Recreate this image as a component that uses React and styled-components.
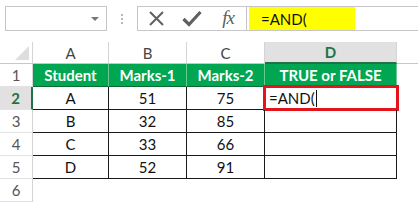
import React from "react";
import styled, { createGlobalStyle } from "styled-components";

const Global = createGlobalStyle`
  html, body { margin: 0; padding: 0; background: #ffffff; }
  body { font-family: Lato, "Open Sans", Arial, sans-serif; overflow: hidden; }
`;

const Page = styled.div`
  width: 418px;
  height: 202px;
  overflow: hidden;
  background: #fff;
`;

const Toolbar = styled.div`
  display: flex;
  align-items: flex-start;
  height: 42px;
  padding-top: 6px;
  box-sizing: border-box;
`;

const NameBox = styled.div`
  margin-left: 5px;
  width: 102px;
  height: 25px;
  box-sizing: border-box;
  border: 1px solid #c6c6c6;
  display: flex;
  align-items: center;
  justify-content: flex-end;
  padding-right: 7px;
`;

const Caret = styled.div`
  width: 0;
  height: 0;
  border-left: 4px solid transparent;
  border-right: 4px solid transparent;
  border-top: 4px solid #777;
`;

const Dots = styled.div`
  width: 30px;
  height: 25px;
  display: flex;
  flex-direction: column;
  align-items: center;
  justify-content: center;
  gap: 2px;
  & > span {
    width: 2px;
    height: 2px;
    background: #b8b8b8;
  }
`;

const FormulaBar = styled.div`
  flex: 1;
  height: 25px;
  box-sizing: border-box;
  border: 1px solid #c6c6c6;
  border-right: none;
  display: flex;
  align-items: stretch;
`;

const IconSlot = styled.div`
  width: ${(p) => p.$w}px;
  display: flex;
  align-items: center;
  justify-content: center;
  border-right: ${(p) => (p.$sep ? "1px solid #c6c6c6" : "none")};
  box-sizing: border-box;
`;

const Fx = styled.span`
  font-family: "Liberation Serif", "DejaVu Serif", serif;
  font-style: italic;
  font-size: 19px;
  color: #606060;
  letter-spacing: -1px;
  line-height: 1;
  margin-top: -2px;
`;

const Formula = styled.div`
  margin-left: 2px;
  width: 106px;
  background: #ffff00;
  font-size: 15px;
  color: #111;
  display: flex;
  align-items: center;
  padding-left: 12px;
  box-sizing: border-box;
`;

const Sheet = styled.div`
  display: grid;
  grid-template-columns: 33px 76px 78px 78px 132px 1fr;
  grid-template-rows: 22px repeat(6, 23px);
`;

const Corner = styled.div`
  position: relative;
  border-right: 1px solid #d4d4d4;
  border-bottom: 1px solid #c8c8c8;
  box-sizing: border-box;
  display: flex;
  align-items: flex-end;
  justify-content: flex-end;
  padding: 0 3px 3px 0;
`;

const Tri = styled.div`
  width: 0;
  height: 0;
  border-left: 14px solid transparent;
  border-bottom: 14px solid #dedede;
`;

const ColHead = styled.div`
  box-sizing: border-box;
  display: flex;
  align-items: center;
  justify-content: center;
  font-size: 15px;
  color: ${(p) => (p.$sel ? "#217346" : "#444")};
  font-weight: ${(p) => (p.$sel ? 700 : 400)};
  background: ${(p) => (p.$sel ? "#e1e1e1" : "#fff")};
  border-right: ${(p) => (p.$last ? "none" : "1px solid #d4d4d4")};
  border-bottom: ${(p) => (p.$sel ? "2px solid #217346" : "1px solid #c8c8c8")};
`;

const RowHead = styled.div`
  box-sizing: border-box;
  display: flex;
  align-items: center;
  justify-content: center;
  font-size: 15px;
  color: ${(p) => (p.$sel ? "#217346" : "#555")};
  font-weight: ${(p) => (p.$sel ? 700 : 400)};
  background: ${(p) => (p.$sel ? "#e1e1e1" : "#fff")};
  border-right: ${(p) => (p.$sel ? "2px solid #217346" : "1px solid #d4d4d4")};
  border-bottom: 1px solid #e2e2e2;
`;

const Cell = styled.div`
  position: relative;
  box-sizing: border-box;
  display: flex;
  align-items: center;
  justify-content: ${(p) => (p.$left ? "flex-start" : "center")};
  padding-left: ${(p) => (p.$left ? "4px" : "0")};
  font-size: 15px;
  color: #111;
  border-right: ${(p) => (p.$table ? "1px solid #1a1a1a" : "none")};
  border-bottom: ${(p) => (p.$table ? "1px solid #1a1a1a" : "none")};
`;

const HeadCell = styled(Cell)`
  background: #00a651;
  color: #fff;
  font-weight: 700;
  font-size: 15px;
  border-right: 1px solid #6cc893;
  border-bottom: 1px solid #0b6b33;
`;

const Active = styled.div`
  position: absolute;
  left: -2px;
  top: -2px;
  right: -3px;
  bottom: -2px;
  border: 3px solid #e3151b;
  pointer-events: none;
`;

const TextCaret = styled.span`
  display: inline-block;
  width: 1px;
  height: 17px;
  background: #111;
  margin-left: 1px;
`;

const data = [
  ["A", "51", "75"],
  ["B", "32", "85"],
  ["C", "33", "66"],
  ["D", "52", "91"],
];

export default function App() {
  return (
    <Page>
      <Global />
      <Toolbar>
        <NameBox>
          <Caret />
        </NameBox>
        <Dots>
          <span />
          <span />
          <span />
        </Dots>
        <FormulaBar>
          <IconSlot $w={36}>
            <svg width="17" height="17" viewBox="0 0 17 17">
              <path d="M2 2 L15 15 M15 2 L2 15" stroke="#606060" strokeWidth="2" fill="none" />
            </svg>
          </IconSlot>
          <IconSlot $w={36}>
            <svg width="20" height="17" viewBox="0 0 20 17">
              <path d="M1.5 9 L7 14.5 L18.5 2" stroke="#606060" strokeWidth="3.2" fill="none" />
            </svg>
          </IconSlot>
          <IconSlot $w={37} $sep>
            <Fx>fx</Fx>
          </IconSlot>
          <Formula>=AND(</Formula>
        </FormulaBar>
      </Toolbar>
      <Sheet>
        <Corner>
          <Tri />
        </Corner>
        <ColHead>A</ColHead>
        <ColHead>B</ColHead>
        <ColHead>C</ColHead>
        <ColHead $sel>D</ColHead>
        <ColHead $last />

        <RowHead>1</RowHead>
        <HeadCell $table>Student</HeadCell>
        <HeadCell $table>Marks-1</HeadCell>
        <HeadCell $table>Marks-2</HeadCell>
        <HeadCell $table>TRUE or FALSE</HeadCell>
        <Cell />

        {data.map((r, i) => (
          <React.Fragment key={i}>
            <RowHead $sel={i === 0}>{i + 2}</RowHead>
            <Cell $table>{r[0]}</Cell>
            <Cell $table>{r[1]}</Cell>
            <Cell $table>{r[2]}</Cell>
            {i === 0 ? (
              <Cell $table $left>
                =AND(
                <TextCaret />
                <Active />
              </Cell>
            ) : (
              <Cell $table />
            )}
            <Cell />
          </React.Fragment>
        ))}

        <RowHead>6</RowHead>
        <Cell />
        <Cell />
        <Cell />
        <Cell />
        <Cell />
      </Sheet>
    </Page>
  );
}
